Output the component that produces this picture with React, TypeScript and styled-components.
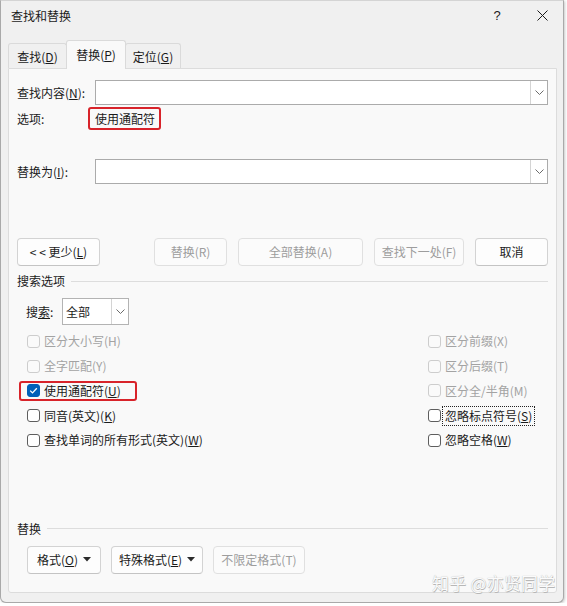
import React from 'react';
import styled, { createGlobalStyle } from 'styled-components';

const GlobalStyle = createGlobalStyle`
  html, body {
    margin: 0;
    padding: 0;
    background: #ffffff;
  }

  body {
    font-family: "Noto Sans CJK SC", "Noto Sans", sans-serif;
    font-size: 12px;
    color: #1b1b1b;
  }

  * {
    box-sizing: border-box;
  }
`;

type TCheck = {
  label: React.ReactNode;
  disabled?: boolean;
  checked?: boolean;
  highlight?: boolean;
  focused?: boolean;
};

const leftChecks: TCheck[] = [
  { label: '区分大小写(H)', disabled: true },
  { label: '全字匹配(Y)', disabled: true },
  {
    label: (
      <>
        使用通配符(<u>U</u>)
      </>
    ),
    checked: true,
    highlight: true,
  },
  {
    label: (
      <>
        同音(英文)(<u>K</u>)
      </>
    ),
  },
  {
    label: (
      <>
        查找单词的所有形式(英文)(<u>W</u>)
      </>
    ),
  },
];

const rightChecks: TCheck[] = [
  { label: '区分前缀(X)', disabled: true },
  { label: '区分后缀(T)', disabled: true },
  { label: '区分全/半角(M)', disabled: true },
  {
    label: (
      <>
        忽略标点符号(<u>S</u>)
      </>
    ),
    focused: true,
  },
  {
    label: (
      <>
        忽略空格(<u>W</u>)
      </>
    ),
  },
];

const Chevron = () => (
  <svg width="9" height="5" viewBox="0 0 9 5">
    <polyline points="0.5,0.5 4.5,4.5 8.5,0.5" fill="none" stroke="#6b6b6b" strokeWidth="1" />
  </svg>
);

const Caret = () => (
  <svg width="8" height="5" viewBox="0 0 8 5">
    <polygon points="0,0 8,0 4,4.5" fill="#2b2b2b" />
  </svg>
);

const Check = ({ item }: { item: TCheck }) => (
  <CheckItem $disabled={item.disabled} $highlight={item.highlight}>
    <Box $disabled={item.disabled} $checked={item.checked}>
      {item.checked && (
        <svg width="11" height="11" viewBox="0 0 11 11">
          <polyline points="2.2,5.6 4.5,7.9 8.8,3.2" fill="none" stroke="#ffffff" strokeWidth="1.3" />
        </svg>
      )}
    </Box>
    <CheckText $focused={item.focused}>{item.label}</CheckText>
  </CheckItem>
);

const App = () => {
  const rows = leftChecks.map((left, i) => [left, rightChecks[i]]);

  return (
    <>
      <GlobalStyle />
      <Window>
        <TitleBar>
          <Title>查找和替换</Title>
          <TitleButton $w={48}>?</TitleButton>
          <TitleButton $w={42}>
            <svg width="11" height="11" viewBox="0 0 11 11">
              <line x1="0.5" y1="0.5" x2="10.5" y2="10.5" stroke="#1b1b1b" strokeWidth="1" />
              <line x1="10.5" y1="0.5" x2="0.5" y2="10.5" stroke="#1b1b1b" strokeWidth="1" />
            </svg>
          </TitleButton>
        </TitleBar>

        <TabStrip>
          <Tab $w={59}>
            查找(<u>D</u>)
          </Tab>
          <Tab $w={60} $active>
            替换(<u>P</u>)
          </Tab>
          <Tab $w={56}>
            定位(<u>G</u>)
          </Tab>
        </TabStrip>

        <Panel>
          <FieldRow $top={11}>
            <FieldLabel>
              查找内容(<u>N</u>):
            </FieldLabel>
            <Combo>
              <DropButton>
                <Chevron />
              </DropButton>
            </Combo>
          </FieldRow>

          <OptionsRow>
            <OptionsLabel>选项:</OptionsLabel>
            <Marked>使用通配符</Marked>
          </OptionsRow>

          <FieldRow $top={29}>
            <FieldLabel>
              替换为(<u>I</u>):
            </FieldLabel>
            <Combo>
              <DropButton>
                <Chevron />
              </DropButton>
            </Combo>
          </FieldRow>

          <ActionRow>
            <Button $w={83}>
              <span>
                &lt; &lt; 更少(<u>L</u>)
              </span>
            </Button>
            <ActionGroup>
              <Button $w={73} disabled>
                <span>替换(R)</span>
              </Button>
              <Button $w={125} disabled>
                <span>全部替换(A)</span>
              </Button>
              <Button $w={90} disabled>
                <span>查找下一处(F)</span>
              </Button>
              <Button $w={73}>
                <span>取消</span>
              </Button>
            </ActionGroup>
          </ActionRow>

          <GroupHeader $top={7}>搜索选项</GroupHeader>

          <SearchRow>
            <SearchLabel>
              搜<u>索</u>:
            </SearchLabel>
            <Select>
              <SelectValue>全部</SelectValue>
              <DropButton>
                <Chevron />
              </DropButton>
            </Select>
          </SearchRow>

          <CheckGrid>
            {rows.map(([left, right], i) => (
              <React.Fragment key={i}>
                <Check item={left} />
                <Check item={right} />
              </React.Fragment>
            ))}
          </CheckGrid>

          <GroupHeader $top={68}>替换</GroupHeader>

          <FormatRow>
            <Button $w={74}>
              <span>
                格式(<u>O</u>)
              </span>
              <Caret />
            </Button>
            <Button $w={92}>
              <span>
                特殊格式(<u>E</u>)
              </span>
              <Caret />
            </Button>
            <Button $w={92} disabled>
              <span>不限定格式(T)</span>
            </Button>
          </FormatRow>
        </Panel>

        <Watermark>知乎 @亦贤同学</Watermark>
      </Window>
    </>
  );
};

export default App;

const Window = styled.div`
  position: relative;
  width: 564px;
  height: 603px;
  background: #f0f0f0;
  border: 1px solid #a9a9a9;
  border-top-color: #d4d4d4;
  border-radius: 0 0 6px 6px;
  box-shadow: 1px 1px 3px rgba(0, 0, 0, 0.22);
  overflow: hidden;
`;

const TitleBar = styled.div`
  height: 29px;
  display: flex;
  align-items: center;
  padding-left: 10px;
`;

const Title = styled.div`
  flex: 1;
  font-size: 12px;
  line-height: 16px;
`;

const TitleButton = styled.div<{ $w: number }>`
  width: ${(p) => p.$w}px;
  height: 29px;
  display: flex;
  align-items: center;
  justify-content: center;
  font-family: "Liberation Sans", sans-serif;
  font-size: 13px;
  color: #1b1b1b;
`;

const TabStrip = styled.div`
  height: 38px;
  display: flex;
  align-items: flex-end;
  padding-left: 7px;
`;

const Tab = styled.div<{ $w: number; $active?: boolean }>`
  position: relative;
  z-index: ${(p) => (p.$active ? 2 : 1)};
  width: ${(p) => p.$w}px;
  height: ${(p) => (p.$active ? 29 : 25)}px;
  margin-right: -1px;
  margin-bottom: ${(p) => (p.$active ? -1 : 0)}px;
  padding-top: ${(p) => (p.$active ? 0 : 2)}px;
  display: flex;
  align-items: center;
  justify-content: center;
  border: 1px solid #dadada;
  border-bottom: none;
  border-radius: 3px 3px 0 0;
  background: ${(p) => (p.$active ? '#f9f9f9' : '#f0f0f0')};
  line-height: 16px;
  white-space: nowrap;
`;

const Panel = styled.div`
  position: relative;
  z-index: 1;
  width: 549px;
  height: 525px;
  margin-left: 7px;
  padding: 0 8px;
  display: flex;
  flex-direction: column;
  background: #f9f9f9;
  border: 1px solid #dcdcdc;
  border-radius: 0 0 3px 3px;
`;

const FieldRow = styled.div<{ $top: number }>`
  height: 25px;
  margin-top: ${(p) => p.$top}px;
  display: flex;
  align-items: center;
`;

const FieldLabel = styled.div`
  width: 78px;
  flex: none;
  line-height: 16px;
  white-space: nowrap;
`;

const Combo = styled.div`
  flex: 1;
  height: 25px;
  display: flex;
  justify-content: flex-end;
  background: #ffffff;
  border: 1px solid #ababab;
`;

const DropButton = styled.div`
  width: 17px;
  height: 100%;
  flex: none;
  display: flex;
  align-items: center;
  justify-content: center;
  background: #ffffff;
  border-left: 1px solid #d4d4d4;
`;

const OptionsRow = styled.div`
  height: 23px;
  margin-top: 2px;
  display: flex;
  align-items: center;
`;

const OptionsLabel = styled.div`
  width: 71px;
  flex: none;
  line-height: 16px;
`;

const Marked = styled.div`
  height: 23px;
  padding: 0 4px 0 5px;
  display: flex;
  align-items: center;
  border: 2px solid #d8232a;
  border-radius: 3px;
  line-height: 16px;
`;

const ActionRow = styled.div`
  height: 28px;
  margin-top: 54px;
  display: flex;
  justify-content: space-between;
`;

const ActionGroup = styled.div`
  display: flex;
  gap: 11px;
`;

const Button = styled.button<{ $w: number }>`
  width: ${(p) => p.$w}px;
  height: 28px;
  padding: 0;
  display: flex;
  align-items: center;
  justify-content: center;
  gap: 5px;
  font-family: inherit;
  font-size: 12px;
  line-height: 16px;
  color: #1b1b1b;
  background: #fdfdfd;
  border: 1px solid #d3d3d3;
  border-bottom-color: #c4c4c4;
  border-radius: 4px;
  white-space: nowrap;

  &:disabled {
    color: #9d9d9d;
    background: #fbfbfb;
    border-color: #e0e0e0;
  }
`;

const GroupHeader = styled.div<{ $top: number }>`
  height: 16px;
  margin-top: ${(p) => p.$top}px;
  display: flex;
  align-items: center;
  gap: 6px;
  line-height: 16px;

  &::after {
    content: '';
    flex: 1;
    height: 1px;
    background: #dddddd;
  }
`;

const SearchRow = styled.div`
  height: 27px;
  margin-top: 9px;
  padding-left: 9px;
  display: flex;
  align-items: center;
`;

const SearchLabel = styled.div`
  width: 36px;
  line-height: 16px;
`;

const Select = styled.div`
  width: 67px;
  height: 27px;
  display: flex;
  background: #ffffff;
  border: 1px solid #b3b3b3;
`;

const SelectValue = styled.div`
  flex: 1;
  padding-left: 3px;
  display: flex;
  align-items: center;
  line-height: 16px;
`;

const CheckGrid = styled.div`
  margin-top: 4px;
  padding-left: 10px;
  display: grid;
  grid-template-columns: 401px 1fr;
  grid-auto-rows: 24.75px;
`;

const CheckItem = styled.div<{ $disabled?: boolean; $highlight?: boolean }>`
  position: relative;
  justify-self: start;
  display: inline-flex;
  align-items: center;
  gap: 3px;
  color: ${(p) => (p.$disabled ? '#a3a3a3' : '#1b1b1b')};
  line-height: 16px;
  white-space: nowrap;

  ${(p) =>
    p.$highlight &&
    `
    &::after {
      content: '';
      position: absolute;
      left: -8px;
      right: -13px;
      top: 2px;
      bottom: 2px;
      border: 2px solid #d8232a;
      border-radius: 3px;
    }
  `}
`;

const Box = styled.span<{ $disabled?: boolean; $checked?: boolean }>`
  width: 13px;
  height: 13px;
  flex: none;
  display: flex;
  align-items: center;
  justify-content: center;
  border-radius: 3px;
  border: 1px solid
    ${(p) => (p.$checked ? '#0060b9' : p.$disabled ? '#cdcdcd' : '#5e5e5e')};
  background: ${(p) => (p.$checked ? '#0060b9' : p.$disabled ? '#fafafa' : '#ffffff')};
`;

const CheckText = styled.span<{ $focused?: boolean }>`
  padding: 1px 2px;
  border: 1px dotted ${(p) => (p.$focused ? '#222222' : 'transparent')};
  margin-left: -2px;
`;

const FormatRow = styled.div`
  margin-top: 9px;
  padding-left: 10px;
  display: flex;
  gap: 10px;
`;

const Watermark = styled.div`
  position: absolute;
  left: 431px;
  top: 571px;
  z-index: 3;
  font-size: 17px;
  line-height: 22px;
  letter-spacing: 0.2px;
  color: #fbfbfb;
  text-shadow: 0 0 1px #b0b0b0, 0.5px 0.5px 0.5px #b8b8b8;
  white-space: nowrap;
`;
